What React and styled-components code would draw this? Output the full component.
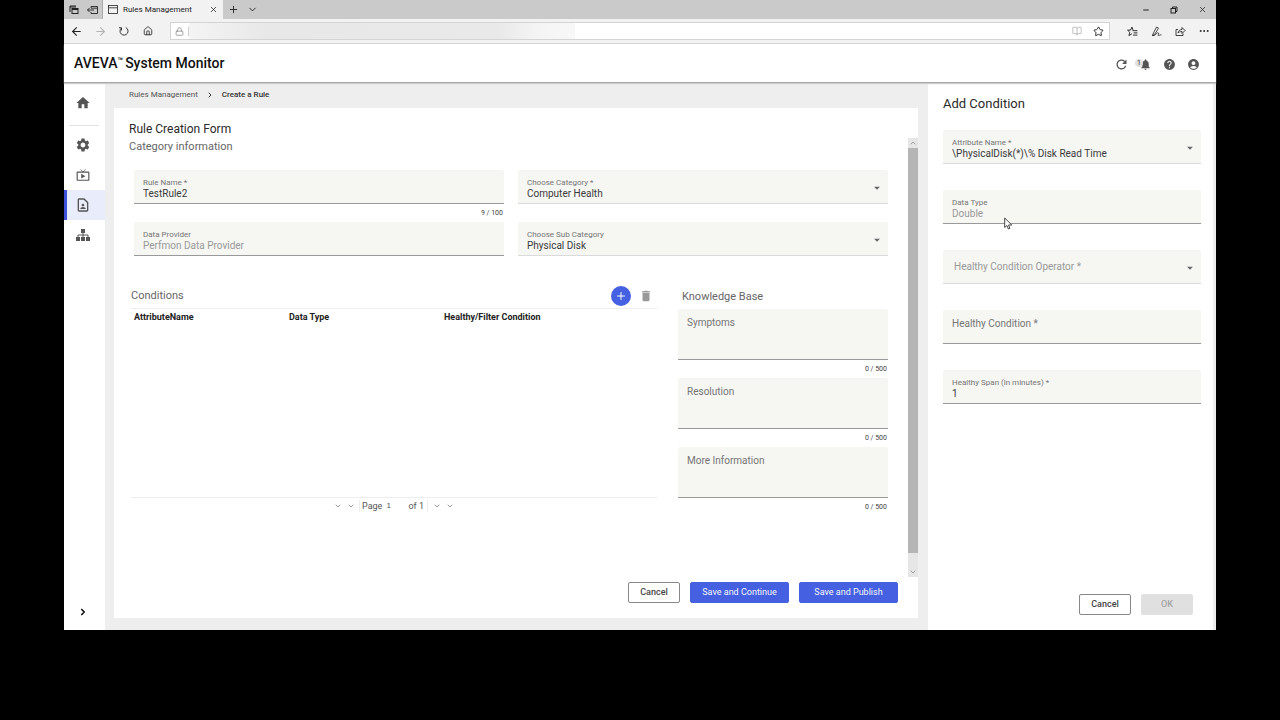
import React from "react";
import styled, { createGlobalStyle, css } from "styled-components";
import {
  MdHome, MdSettings, MdLiveTv, MdOutlineContactPage, MdRefresh, MdNotifications,
  MdHelp, MdAccountCircle, MdDelete, MdArrowDropDown,
} from "react-icons/md";
import {
  ArrowLeft, ArrowRight, House, Lock, BookOpen, Star, Minus, X, Plus,
  ChevronDown, ChevronUp, ChevronRight, Ellipsis,
} from "lucide-react";

const GlobalStyle = createGlobalStyle`
  *, *::before, *::after { box-sizing: border-box; }
  body {
    margin: 0;
    background: #000;
    color: #3a3a3a;
    font: 400 10px/12px Roboto, "Liberation Sans", sans-serif;
  }
  button, input, select, textarea { font: inherit; color: inherit; margin: 0; }
  button { cursor: pointer; }
  svg { display: block; flex: none; }
`;

const BrowserWindow = styled.div`
  display: flex;
  flex-direction: column;
  min-height: calc(100vh - 90px);
  margin: 0 64px 90px;
  background: #eee;
`;

/* ---------- browser chrome ---------- */
const TabStrip = styled.div`
  display: flex;
  height: 19px;
  background: #cacaca;
  color: #222;
`;

const Tab = styled.div`
  display: flex;
  align-items: center;
  gap: 5px;
  width: 121px;
  padding: 0 6px 0 5px;
  border-left: 1px solid #aaa;
  background: #f2f2f2;
  font-size: 8px;
  line-height: 12px;
  white-space: nowrap;
`;

const Push = styled.span`
  margin-left: auto;
`;

const ChromeButton = styled.button`
  display: flex;
  align-items: center;
  justify-content: center;
  flex: none;
  width: ${(p) => p.$width || 24}px;
  padding: 0;
  border: 0;
  background: none;
  color: ${(p) => (p.$muted ? "#b4b4b4" : "#222")};
`;

const PlainGroup = styled.div`
  display: flex;
  margin-left: ${(p) => (p.$end ? "auto" : "0")};
`;

const NavBar = styled.div`
  display: flex;
  height: 25px;
  border-bottom: 1px solid #d4d4d4;
  background: #f2f2f2;
`;

const AddressBar = styled.div`
  display: flex;
  align-items: center;
  flex: 1;
  margin: 3px 10px 3px;
  border: 1px solid #d4d4d4;
  background: #fff;
`;

const AddressLock = styled.span`
  display: flex;
  justify-content: center;
  width: 18px;
  border-right: 1px solid #ccc;
  color: #888;
`;

const HiddenAddress = styled.span`
  align-self: stretch;
  width: 386px;
  background: linear-gradient(90deg, #f4f4f4, #e8e8e8 20%, #e9e9e9 80%, #f4f4f4 90%, #f8f8f8);
`;

const AddressInput = styled.input`
  flex: 1;
  min-width: 0;
  border: 0;
  outline: 0;
  background: none;
`;

/* ---------- application header ---------- */
const AppHeader = styled.header`
  position: relative;
  z-index: 1;
  display: flex;
  align-items: center;
  justify-content: space-between;
  height: 39px;
  padding: 0 10px;
  border-bottom: 1px solid #a8a8a8;
  box-shadow: 0 1px 1px #ccc;
  background: #fff;
`;

const Brand = styled.h1`
  margin: 0;
  color: #111;
  font-size: 14px;
  line-height: 20px;
  font-weight: 500;

  sup {
    margin-right: 2px;
    font-size: 9px;
    line-height: 9px;
    vertical-align: 4px;
  }
`;

const HeaderTools = styled.div`
  display: flex;
  padding: 2px 1px 0 0;
`;

const HeaderButton = styled.button`
  position: relative;
  display: flex;
  align-items: center;
  justify-content: center;
  width: 24px;
  padding: 0;
  border: 0;
  background: none;
  color: #555;
`;

const Badge = styled.span`
  position: absolute;
  top: 2px;
  left: 2px;
  width: 8px;
  height: 8px;
  border-radius: 4px;
  background: #e0e0e0;
  color: #333;
  font-size: 7px;
  line-height: 8px;
  text-align: center;
`;

/* ---------- body ---------- */
const AppBody = styled.div`
  display: flex;
  flex: 1;
`;

const SideNav = styled.nav`
  display: flex;
  flex-direction: column;
  flex: none;
  width: 41px;
  padding: 5px 0;
  background: #fff;
`;

const SideLink = styled.a`
  display: flex;
  align-items: center;
  justify-content: center;
  height: 30px;
  padding-right: 6px;
  border-left: 3px solid ${(p) => (p.$active ? "#3f51d8" : "transparent")};
  background: ${(p) => (p.$active ? "#e8ecfb" : "transparent")};
  color: #555;
`;

const SideDivider = styled.hr`
  width: 30px;
  margin: 7px 5px 4px;
  border: 0;
  border-top: 1px solid #e2e2e2;
`;

const ExpandButton = styled.button`
  display: flex;
  justify-content: center;
  margin-top: auto;
  padding: 8px 4px 8px 0;
  border: 0;
  background: none;
  color: #111;
`;

const Main = styled.main`
  display: flex;
  flex-direction: column;
  flex: 1;
  min-width: 0;
  padding: 6px 10px 12px 9px;
`;

const Breadcrumb = styled.nav`
  display: flex;
  align-items: center;
  gap: 8px;
  padding: 0 15px;
  margin-bottom: 7px;
  font-size: 8px;
  line-height: 12px;

  a { color: #555; text-decoration: none; }
  b { color: #333; font-weight: 500; }
`;

const Card = styled.section`
  display: flex;
  flex-direction: column;
  flex: 1;
  background: #fff;
`;

const CardRow = styled.div`
  display: flex;
  flex: 1;
`;

const CardContent = styled.div`
  flex: 1;
  min-width: 0;
  padding: 11px 20px 0 15px;
`;

const Title = styled.h2`
  margin: 0;
  color: #2a2a2a;
  font-size: ${(p) => (p.$large ? 13 : 12)}px;
  line-height: 20px;
  font-weight: 400;
`;

const Subtitle = styled.h3`
  margin: 0;
  color: #666;
  font-size: 11px;
  line-height: 16px;
  font-weight: 400;
`;

const FieldGrid = styled.div`
  display: grid;
  grid-template-columns: 1fr 1fr;
  column-gap: 14px;
  padding: 15px 0 10px 5px;
`;

const FieldWrap = styled.div`
  display: flex;
  flex-direction: column;
`;

const FieldBox = styled.div`
  position: relative;
  display: grid;
  height: ${(p) => (p.$tall ? 51 : 34)}px;
  border-bottom: 1px solid ${(p) => (p.$soft ? "#dadada" : "#999")};
  border-radius: 2px 2px 0 0;
  background: #f6f6f3;

  > * { grid-area: 1 / 1; }
`;

const FieldLabel = styled.label`
  align-self: start;
  justify-self: start;
  z-index: 1;
  padding: 8px 9px 0;
  color: #757575;
  font-size: 8px;
  line-height: 10px;
  pointer-events: none;

  ${(p) => p.$resting && css`
    font-size: 10px;
    line-height: 12px;
  `}
  ${(p) => p.$faded && css`
    align-self: center;
    padding: 0 11px;
    color: #999;
  `}
`;

const controlStyle = css`
  width: 100%;
  height: 100%;
  padding: 18px 9px 3px;
  border: 0;
  outline: 0;
  border-radius: 0;
  background: none;
  color: #3a3a3a;
  font-size: 10px;
  line-height: 12px;
`;

const TextInput = styled.input`
  ${controlStyle}
  padding-bottom: 4px;
  &:disabled { color: #999; }
`;

const TextArea = styled.textarea`
  ${controlStyle}
  resize: none;
`;

const Select = styled.select`
  ${controlStyle}
  appearance: none;
`;

const Caret = styled(MdArrowDropDown)`
  align-self: center;
  justify-self: end;
  margin: 3px 4px 0 0;
  color: #666;
  pointer-events: none;
`;

const Counter = styled.div`
  height: 18px;
  padding: 0 1px;
  color: #444;
  font-size: 7px;
  line-height: 18px;
  text-align: right;
`;

const Sections = styled.div`
  display: grid;
  grid-template-columns: 1fr 210px;
  column-gap: 21px;
`;

const SectionHead = styled.div`
  display: flex;
  align-items: center;
  gap: 8px;
  height: ${(p) => (p.$indent ? 25 : 24)}px;
  padding: ${(p) => (p.$indent ? "1px 4px 0" : "0 4px 0 0")};

  h3 { flex: 1; }
`;

const ConditionsSection = styled.section`
  margin-left: 2px;
`;

const AddButton = styled.button`
  display: flex;
  align-items: center;
  justify-content: center;
  width: 20px;
  height: 20px;
  padding: 0;
  border: 0;
  border-radius: 50%;
  background: #4560e0;
  color: #fff;
`;

const DeleteButton = styled.button`
  display: flex;
  padding: 0;
  border: 0;
  background: none;
  color: #999;
`;

const TableFrame = styled.div`
  height: 190px;
  border: solid #eee;
  border-width: 1px 0;
`;

const ConditionsTable = styled.table`
  width: 100%;
  table-layout: fixed;
  border-collapse: collapse;

  th {
    width: 155px;
    padding: 2px 3px;
    color: #222;
    font-size: 9px;
    line-height: 12px;
    font-weight: 700;
    text-align: left;
    white-space: nowrap;
  }
  th:last-child { width: auto; }
`;

const Pager = styled.div`
  display: flex;
  align-items: center;
  justify-content: center;
  height: 16px;
  color: #555;
  font-size: 9px;
  line-height: 12px;
`;

const PagerButton = styled.button`
  display: flex;
  justify-content: center;
  width: 13px;
  padding: 0;
  border: 0;
  background: none;
  color: #999;
`;

const PageBox = styled.label`
  display: flex;
  gap: 4px;
  margin-left: 2px;
  padding-left: 2px;
  border-left: 1px solid #eee;

  input {
    width: 22px;
    height: 12px;
    padding: 0;
    border: 0;
    background: none;
    font: 400 8px/12px "Liberation Sans", sans-serif;
  }
`;

const PageTotal = styled.span`
  margin-right: 3px;
  padding-right: 3px;
  border-right: 1px solid #eee;
`;

const Scrollbar = styled.div`
  display: flex;
  flex-direction: column;
  align-items: center;
  flex: none;
  width: 10px;
  margin-top: 30px;
  padding: 1px 0;
  background: #e6e6e6;
  color: #777;
`;

const ScrollThumb = styled.div`
  flex: 1;
  width: 100%;
  margin: 1px 0 15px;
  background: #b5b5b5;
`;

const ButtonRow = styled.div`
  display: flex;
  justify-content: flex-end;
  gap: 10px;
  padding: ${(p) => (p.$panel ? "0 20px 15px" : "5px 20px 15px")};
  margin-top: ${(p) => (p.$panel ? "auto" : "0")};
`;

const ActionButton = styled.button`
  min-width: ${(p) => (p.$wide ? 99 : 52)}px;
  height: 21px;
  padding: 0;
  border: 1px solid #888;
  border-radius: 2px;
  background: #fff;
  color: #444;
  font-size: 9px;
  line-height: 19px;
  font-weight: 500;

  ${(p) => p.$wide && css`
    border-color: #4560e0;
    background: #4560e0;
    color: #f4f6ff;
    font-weight: 400;
  `}
  &:disabled {
    border-color: #e0e0e0;
    background: #e0e0e0;
    color: #a4a4a4;
  }
`;

const SidePanel = styled.aside`
  display: flex;
  flex-direction: column;
  flex: none;
  width: 288px;
  padding-top: 11px;
  border-right: 3px solid #eee;
  background: #fff;
`;

const PanelFields = styled.div`
  display: flex;
  flex-direction: column;
  gap: 26px;
  padding: 0 12px 0 15px;

  ${Title} { margin-bottom: -10px; }
`;

const Pointer = styled.svg`
  position: absolute;
  left: 61px;
  top: 27px;
  z-index: 2;
`;

/* ---------- drawings ---------- */
const StackedWindows = () => (
  <svg width="10" height="10" viewBox="0 0 10 10" fill="none" stroke="currentColor">
    <path d="M1 7V1h6M1 2h6" /><rect x="3" y="3.5" width="6" height="5" /><path d="M3 4.5h6" />
  </svg>
);
const SetAside = () => (
  <svg width="11" height="10" viewBox="0 0 11 10" fill="none" stroke="currentColor" strokeWidth="0.9">
    <path d="M4 3V1.500h6.500v7H4V7M4 3.200h6.500M.5 5H7M2.500 3L.5 5l2 2" />
  </svg>
);
const TabPage = () => (
  <svg width="10" height="9" viewBox="0 0 10 9" fill="none" stroke="currentColor" strokeWidth="0.8">
    <rect x=".5" y=".5" width="9" height="8" /><path d="M.5 2.8h9" />
  </svg>
);
const Reload = () => (
  <svg width="10" height="10" viewBox="0 0 20 20" fill="none" stroke="currentColor" strokeWidth="1.8">
    <path d="M13.500 3A8 8 0 1 1 5 4M5 9V3.500H0" />
  </svg>
);
const Restore = () => (
  <svg width="8" height="8" viewBox="0 0 8 8" fill="none" stroke="currentColor">
    <rect x="1" y="2.5" width="4.5" height="4.5" /><path d="M2.5 2.5V1H7v4.5H5.5" />
  </svg>
);
const StarList = () => (
  <svg width="11" height="11" viewBox="0 0 20 20" fill="none" stroke="currentColor" strokeWidth="1.7">
    <path d="M11 7.500L9 2 6.500 7.500H1l4 4-1.500 6L9 14M10 8.500h9M12 12.500h7M11 16.500h8" />
  </svg>
);
const Pen = () => (
  <svg width="11" height="11" viewBox="0 0 22 22" fill="none" stroke="currentColor" strokeWidth="1.6">
    <path d="M4 16L11 2l4 2-7 12-5 3zM2 19h5c4-3 6-7 8-5s-3 5 0 5 3-2 6-1" />
  </svg>
);
const Share = () => (
  <svg width="11" height="11" viewBox="0 0 22 22" fill="none" stroke="currentColor" strokeWidth="1.7">
    <path d="M6 7H2v12h14v-4M6 14c1-5 4-7 8-7V3l6 6-6 6v-4c-4 0-6 1-8 3z" />
  </svg>
);
const Sitemap = () => (
  <svg width="14" height="14" viewBox="0 0 14 14" fill="currentColor">
    <path d="M5 1h4v4H5zM0 9h4v4H0zM5 9h4v4H5zM10 9h4v4h-4z" />
    <path d="M7 4.500V10M2 10V7h10v3" fill="none" stroke="currentColor" />
  </svg>
);

/* ---------- fields ---------- */
function Field({ id, label, value = "", options, disabled, counter, faded, multiline, children }) {
  const resting = value === "";
  return (
    <FieldWrap>
      <FieldBox $soft={!!options} $tall={multiline}>
        <FieldLabel htmlFor={id} $resting={resting} $faded={faded}>{label}</FieldLabel>
        {options ? (
          <>
            <Select id={id} defaultValue={value}>
              {options.map((o) => <option key={o} value={o}>{o}</option>)}
            </Select>
            <Caret size={14} />
          </>
        ) : multiline ? (
          <TextArea id={id} defaultValue={value} />
        ) : (
          <TextInput id={id} type="text" defaultValue={value} disabled={disabled} />
        )}
        {children}
      </FieldBox>
      {counter !== undefined && <Counter>{counter}</Counter>}
    </FieldWrap>
  );
}

const notes = ["Symptoms", "Resolution", "More Information"];
const sideItems = [
  { label: "Settings", icon: <MdSettings size={16} /> },
  { label: "Monitoring", icon: <MdLiveTv size={14} /> },
  { label: "Rules", icon: <MdOutlineContactPage size={16} />, active: true },
  { label: "Topology", icon: <Sitemap /> },
];

export default function App() {
  return (
    <>
      <GlobalStyle />
      <BrowserWindow>
        <TabStrip>
          <PlainGroup>
            <ChromeButton $width={19} aria-label="Tabs set aside"><StackedWindows /></ChromeButton>
            <ChromeButton $width={19} aria-label="Set tabs aside"><SetAside /></ChromeButton>
          </PlainGroup>
          <Tab>
            <TabPage />
            <span>Rules Management</span>
            <Push />
            <ChromeButton $width={8} aria-label="Close tab"><X size={9} strokeWidth={2} /></ChromeButton>
          </Tab>
          <ChromeButton $width={20} aria-label="New tab"><Plus size={11} strokeWidth={2} /></ChromeButton>
          <ChromeButton $width={19} aria-label="Tab previews"><ChevronDown size={11} strokeWidth={2} /></ChromeButton>
          <PlainGroup $end>
            <ChromeButton $width={28} aria-label="Minimize"><Minus size={8} strokeWidth={3} /></ChromeButton>
            <ChromeButton $width={28} aria-label="Restore"><Restore /></ChromeButton>
            <ChromeButton $width={28} aria-label="Close"><X size={9} strokeWidth={2} /></ChromeButton>
          </PlainGroup>
        </TabStrip>

        <NavBar>
          <PlainGroup>
            <ChromeButton aria-label="Back"><ArrowLeft size={13} strokeWidth={2} /></ChromeButton>
            <ChromeButton $muted aria-label="Forward"><ArrowRight size={13} strokeWidth={2} /></ChromeButton>
            <ChromeButton aria-label="Reload"><Reload /></ChromeButton>
            <ChromeButton aria-label="Home page"><House size={10} strokeWidth={2} /></ChromeButton>
          </PlainGroup>
          <AddressBar>
            <AddressLock><Lock size={9} /></AddressLock>
            <HiddenAddress />
            <AddressInput type="text" aria-label="Address" />
            <ChromeButton $width={20} $muted aria-label="Reading view"><BookOpen size={10} strokeWidth={2} /></ChromeButton>
            <ChromeButton $width={22} aria-label="Add to favorites"><Star size={11} strokeWidth={2} /></ChromeButton>
          </AddressBar>
          <PlainGroup>
            <ChromeButton aria-label="Favorites"><StarList /></ChromeButton>
            <ChromeButton aria-label="Notes"><Pen /></ChromeButton>
            <ChromeButton aria-label="Share"><Share /></ChromeButton>
            <ChromeButton aria-label="More"><Ellipsis size={12} strokeWidth={2} /></ChromeButton>
          </PlainGroup>
        </NavBar>

        <AppHeader>
          <Brand>AVEVA<sup>™</sup>System Monitor</Brand>
          <HeaderTools>
            <HeaderButton aria-label="Refresh"><MdRefresh size={15} /></HeaderButton>
            <HeaderButton aria-label="Notifications"><MdNotifications size={13} /><Badge>1</Badge></HeaderButton>
            <HeaderButton aria-label="Help"><MdHelp size={13} /></HeaderButton>
            <HeaderButton aria-label="Account"><MdAccountCircle size={13} /></HeaderButton>
          </HeaderTools>
        </AppHeader>

        <AppBody>
          <SideNav>
            <SideLink href="#home" aria-label="Home"><MdHome size={16} /></SideLink>
            <SideDivider />
            {sideItems.map((item) => (
              <SideLink key={item.label} href="#" aria-label={item.label} $active={item.active}>
                {item.icon}
              </SideLink>
            ))}
            <ExpandButton aria-label="Expand navigation"><ChevronRight size={10} strokeWidth={4} /></ExpandButton>
          </SideNav>

          <Main>
            <Breadcrumb>
              <a href="#rules">Rules Management</a>
              <ChevronRight size={8} strokeWidth={3} />
              <b>Create a Rule</b>
            </Breadcrumb>
            <Card>
              <CardRow>
                <CardContent>
                  <Title>Rule Creation Form</Title>
                  <Subtitle>Category information</Subtitle>
                  <FieldGrid>
                    <Field id="rule-name" label="Rule Name *" value="TestRule2" counter="9 / 100" />
                    <Field id="category" label="Choose Category *" value="Computer Health" options={["Computer Health"]} counter="" />
                    <Field id="provider" label="Data Provider" value="Perfmon Data Provider" disabled counter="" />
                    <Field id="sub-category" label="Choose Sub Category" value="Physical Disk" options={["Physical Disk"]} counter="" />
                  </FieldGrid>
                  <Sections>
                    <ConditionsSection>
                      <SectionHead>
                        <Subtitle>Conditions</Subtitle>
                        <AddButton aria-label="Add condition"><Plus size={12} strokeWidth={2} /></AddButton>
                        <DeleteButton aria-label="Delete condition"><MdDelete size={14} /></DeleteButton>
                      </SectionHead>
                      <TableFrame>
                        <ConditionsTable>
                          <thead>
                            <tr>
                              <th>AttributeName</th>
                              <th>Data Type</th>
                              <th>Healthy/Filter Condition</th>
                            </tr>
                          </thead>
                        </ConditionsTable>
                      </TableFrame>
                      <Pager>
                        <PagerButton aria-label="First page"><ChevronDown size={8} strokeWidth={3} /></PagerButton>
                        <PagerButton aria-label="Previous page"><ChevronDown size={8} strokeWidth={3} /></PagerButton>
                        <PageBox>Page <input type="text" defaultValue="1" /></PageBox>
                        <PageTotal>of 1</PageTotal>
                        <PagerButton aria-label="Next page"><ChevronDown size={8} strokeWidth={3} /></PagerButton>
                        <PagerButton aria-label="Last page"><ChevronDown size={8} strokeWidth={3} /></PagerButton>
                      </Pager>
                    </ConditionsSection>
                    <section>
                      <SectionHead $indent><Subtitle>Knowledge Base</Subtitle></SectionHead>
                      {notes.map((n) => (
                        <Field key={n} id={n} label={n} multiline counter="0 / 500" />
                      ))}
                    </section>
                  </Sections>
                </CardContent>
                <Scrollbar>
                  <ChevronUp size={8} strokeWidth={2} />
                  <ScrollThumb />
                  <ChevronDown size={8} strokeWidth={2} />
                </Scrollbar>
              </CardRow>
              <ButtonRow>
                <ActionButton>Cancel</ActionButton>
                <ActionButton $wide>Save and Continue</ActionButton>
                <ActionButton $wide>Save and Publish</ActionButton>
              </ButtonRow>
            </Card>
          </Main>

          <SidePanel>
            <PanelFields>
              <Title $large>Add Condition</Title>
              <Field id="attribute" label="Attribute Name *" value="\PhysicalDisk(*)\% Disk Read Time" options={["\\PhysicalDisk(*)\\% Disk Read Time"]} />
              <Field id="data-type" label="Data Type" value="Double" disabled>
                <Pointer width="9" height="13" viewBox="0 0 9 13" fill="#fff" stroke="#333" strokeWidth="0.9">
                  <path d="M.7 1v9.500l2.200-2 1.500 3.500 1.500-.7L4.500 8h3.300z" />
                </Pointer>
              </Field>
              <Field id="operator" label="Healthy Condition Operator *" options={[""]} faded />
              <Field id="healthy" label="Healthy Condition *" />
              <Field id="span" label="Healthy Span (in minutes) *" value="1" />
            </PanelFields>
            <ButtonRow $panel>
              <ActionButton>Cancel</ActionButton>
              <ActionButton disabled>OK</ActionButton>
            </ButtonRow>
          </SidePanel>
        </AppBody>
      </BrowserWindow>
    </>
  );
}
